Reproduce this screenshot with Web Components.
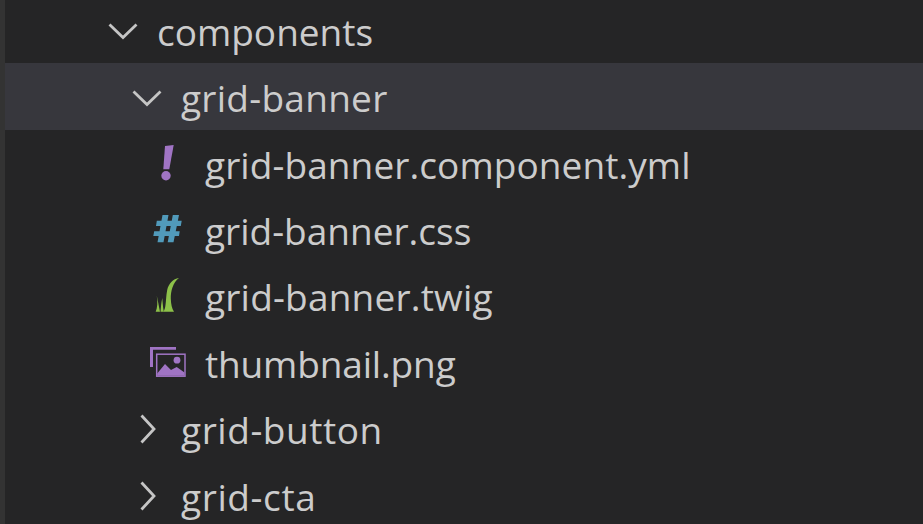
<!DOCTYPE html>
<html>
<head>
<meta charset="utf-8">
<title>Explorer</title>
<style>
  html, body { margin: 0; height: 100%; background: #252526; overflow: hidden; }
</style>
</head>
<body>
<file-tree>
  <tree-row first twisty="open" indent="105">components</tree-row>
  <tree-row twisty="open" indent="129" selected style="letter-spacing:.27px">grid-banner</tree-row>
  <tree-row icon="yaml" indent="153" style="letter-spacing:.08px">grid-banner.component.yml</tree-row>
  <tree-row icon="css" indent="153">grid-banner.css</tree-row>
  <tree-row icon="twig" indent="153" style="letter-spacing:.2px">grid-banner.twig</tree-row>
  <tree-row icon="image" indent="153" style="letter-spacing:-.15px">thumbnail.png</tree-row>
  <tree-row twisty="closed" indent="129" style="letter-spacing:.55px">grid-button</tree-row>
  <tree-row twisty="closed" indent="129" style="letter-spacing:.6px">grid-cta</tree-row>
</file-tree>
<script>
// every icon is drawn in a 36x36 box centred on its row
var ICONS = {
  open: '<path d="M4.5 12.500 L18 25.500 L31.500 12.500" fill="none" stroke="#c5c5c5" stroke-width="2.800"/>',
  closed: '<path d="M12.500 5.500 L25 19 L12.500 32.500" fill="none" stroke="#c5c5c5" stroke-width="2.800"/>',
  yaml: '<path d="M12 1 L20.700 0 L16.300 24.300 L10.300 24.300 Z" fill="#a074c4"/><circle cx="13" cy="30.700" r="4.700" fill="#a074c4"/>',
  css: '<path d="M9.500 4 H15.500 L10.500 31.300 H4.500 Z M19.800 4 H26 L20.500 31.300 H14.700 Z M3.800 9.800 H28.700 L27.800 15 H3 Z M1.200 20.300 H26.700 L26 25 H.3 Z" fill="#519aba"/>',
  twig: '<path d="M26 1 C20 1.500 15.500 7 14.200 13 C13 19 13.200 24 12.500 28 C12.200 31 11.500 33 10.500 34.700 L21 34.700 C19 32 18 27 17.800 22 C17.600 14 20 5.500 26 1 Z" fill="#8dc149"/><path d="M3.800 19 C4.800 25 4.400 31 2.700 34.700 L7 34.700 C5.800 29 5 24 3.800 19 Z M9.300 21 C8.300 25 8 30 7.500 34.700 L10.800 34.700 C10 30 9.500 25 9.300 21 Z" fill="#8dc149"/>',
  image: '<path d="M-3 3 H23 V5.700 H0 V23 H-3 Z" fill="#a074c4"/><rect x="3.700" y="10.200" width="28.300" height="22" fill="none" stroke="#a074c4" stroke-width="1.500"/><path d="M4.200 31.800 V29.500 L12 20 L18 26 L23.700 23 L31.500 28.500 V31.800 Z" fill="#a074c4"/><circle cx="24" cy="16.200" r="3.400" fill="#a074c4"/>'
};

class FileTree extends HTMLElement {
  constructor () {
    super();
    this.attachShadow({ mode: 'open' });
    this.shadowRoot.innerHTML = `<style>
        :host {
          display: flex;
          flex-direction: column;
          margin-left: 5px;
          background: #252526;
          box-shadow: -5px 0 0 #333333;
          font-family: "Open Sans", sans-serif;
          font-size: 37px;
          color: #cccccc;
          height: 524px;
          overflow: hidden;
        }
      </style>
      <slot></slot>`;
  }
}

class TreeRow extends HTMLElement {
  constructor () {
    super();
    this.attachShadow({ mode: 'open' });
  }
  connectedCallback () {
    var name = this.getAttribute('twisty') || this.getAttribute('icon');
    var indent = parseInt(this.getAttribute('indent')) - 5;
    this.shadowRoot.innerHTML = `<style>
        :host {
          display: flex;
          flex: none;
          align-items: center;
          height: 66.4px;
          white-space: nowrap;
        }
        :host([first]) {
          margin-top: -3.4px;
        }
        :host([selected]) {
          background: #37373d;
          height: 67px;
          margin-bottom: -.6px;
        }
        :host([selected]) .label {
          margin-top: 2px;
        }
        .icon {
          display: flex;
          flex: none;
          width: 52px;
          height: 36px;
        }
        svg {
          overflow: visible;
        }
        .label {
          display: block;
          margin-top: 3px;
        }
      </style>
      <span class="icon" style="margin-left:${indent}px"><svg width="36" height="36" viewBox="0 0 36 36">${ICONS[name]}</svg></span>
      <span class="label"><slot></slot></span>`;
  }
}

customElements.define('file-tree', FileTree);
customElements.define('tree-row', TreeRow);
</script>
</body>
</html>
